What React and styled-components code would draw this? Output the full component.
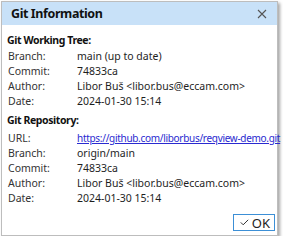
import React from 'react';
import styled, { createGlobalStyle } from 'styled-components';

const Global = createGlobalStyle`
  html, body {
    margin: 0;
    background: #ffffff;
  }
  body {
    font-family: "Noto Sans", "Open Sans", sans-serif;
    color: #1e1e1e;
  }
`;

const Dialog = styled.div`
  margin: 1px 0 0 1px;
  width: 277px;
  height: 235px;
  box-sizing: border-box;
  border: 1px solid #bdbdbd;
  background: #fff;
  box-shadow: 2px 2px 3px rgba(0, 0, 0, 0.35);
  display: flex;
  flex-direction: column;
`;

const TitleBar = styled.div`
  height: 23px;
  background: #c8e1f8;
  display: flex;
  align-items: center;
  justify-content: space-between;
  padding: 0 9px 0 9px;
`;

const Title = styled.div`
  font-size: 12.5px;
  letter-spacing: -0.4px;
  font-weight: 700;
  color: #111;
`;

const Close = styled.button`
  border: 0;
  background: transparent;
  padding: 0;
  width: 12px;
  height: 12px;
  display: flex;
  align-items: center;
  justify-content: center;
`;

const Body = styled.div`
  flex: 1;
  padding: 6px 2px 0 5px;
  display: flex;
  flex-direction: column;
`;

const Heading = styled.div`
  font-size: 10.5px;
  letter-spacing: -0.4px;
  font-weight: 700;
  line-height: 18px;
  margin-top: ${p => (p.$first ? 0 : 2)}px;
  margin-bottom: ${p => (p.$first ? 0 : 2)}px;
  color: #111;
`;

const Table = styled.div`
  display: grid;
  grid-template-columns: 69px 1fr;
  grid-auto-rows: 15px;
  padding-left: 1px;
  font-size: 10.5px;
  line-height: 15px;
  white-space: nowrap;
`;

const Label = styled.div`
  color: #333;
`;

const Value = styled.div`
  color: #1e1e1e;
`;

const Link = styled.a`
  color: #2a2ad0;
  font-size: 10px;
  letter-spacing: -0.3px;
  text-decoration: underline;
`;

const Footer = styled.div`
  margin-top: auto;
  display: flex;
  justify-content: flex-end;
  padding: 0 0 4px 0;
`;

const OkButton = styled.button`
  display: flex;
  align-items: center;
  gap: 3px;
  height: 17px;
  padding: 0 4px 0 6px;
  border: 1px solid #3c8fd6;
  background: #fff;
  font-family: "Noto Sans", sans-serif;
  font-size: 13px;
  color: #222;
`;

const Close_X = () => (
  <svg width="10" height="10" viewBox="0 0 10 10">
    <path d="M1 1L9 9M9 1L1 9" stroke="#555" strokeWidth="1.1" fill="none" />
  </svg>
);

const Check = () => (
  <svg width="9" height="7" viewBox="0 0 9 7">
    <path d="M0.8 3.4L3.2 5.8L8.2 0.8" stroke="#333" strokeWidth="1" fill="none" />
  </svg>
);

const working = [
  ['Branch:', 'main (up to date)'],
  ['Commit:', '74833ca'],
  ['Author:', 'Libor Buš <libor.bus@eccam.com>'],
  ['Date:', '2024-01-30 15:14'],
];

const repo = [
  ['Branch:', 'origin/main'],
  ['Commit:', '74833ca'],
  ['Author:', 'Libor Buš <libor.bus@eccam.com>'],
  ['Date:', '2024-01-30 15:14'],
];

export default function App() {
  return (
    <>
      <Global />
      <Dialog>
        <TitleBar>
          <Title>Git Information</Title>
          <Close><Close_X /></Close>
        </TitleBar>
        <Body>
          <Heading $first>Git Working Tree:</Heading>
          <Table>
            {working.map(([k, v]) => (
              <React.Fragment key={k}>
                <Label>{k}</Label>
                <Value>{v}</Value>
              </React.Fragment>
            ))}
          </Table>
          <Heading>Git Repository:</Heading>
          <Table>
            <Label>URL:</Label>
            <Value>
              <Link href="#">https://github.com/liborbus/reqview-demo.git</Link>
            </Value>
            {repo.map(([k, v]) => (
              <React.Fragment key={k}>
                <Label>{k}</Label>
                <Value>{v}</Value>
              </React.Fragment>
            ))}
          </Table>
          <Footer>
            <OkButton><Check />OK</OkButton>
          </Footer>
        </Body>
      </Dialog>
    </>
  );
}
